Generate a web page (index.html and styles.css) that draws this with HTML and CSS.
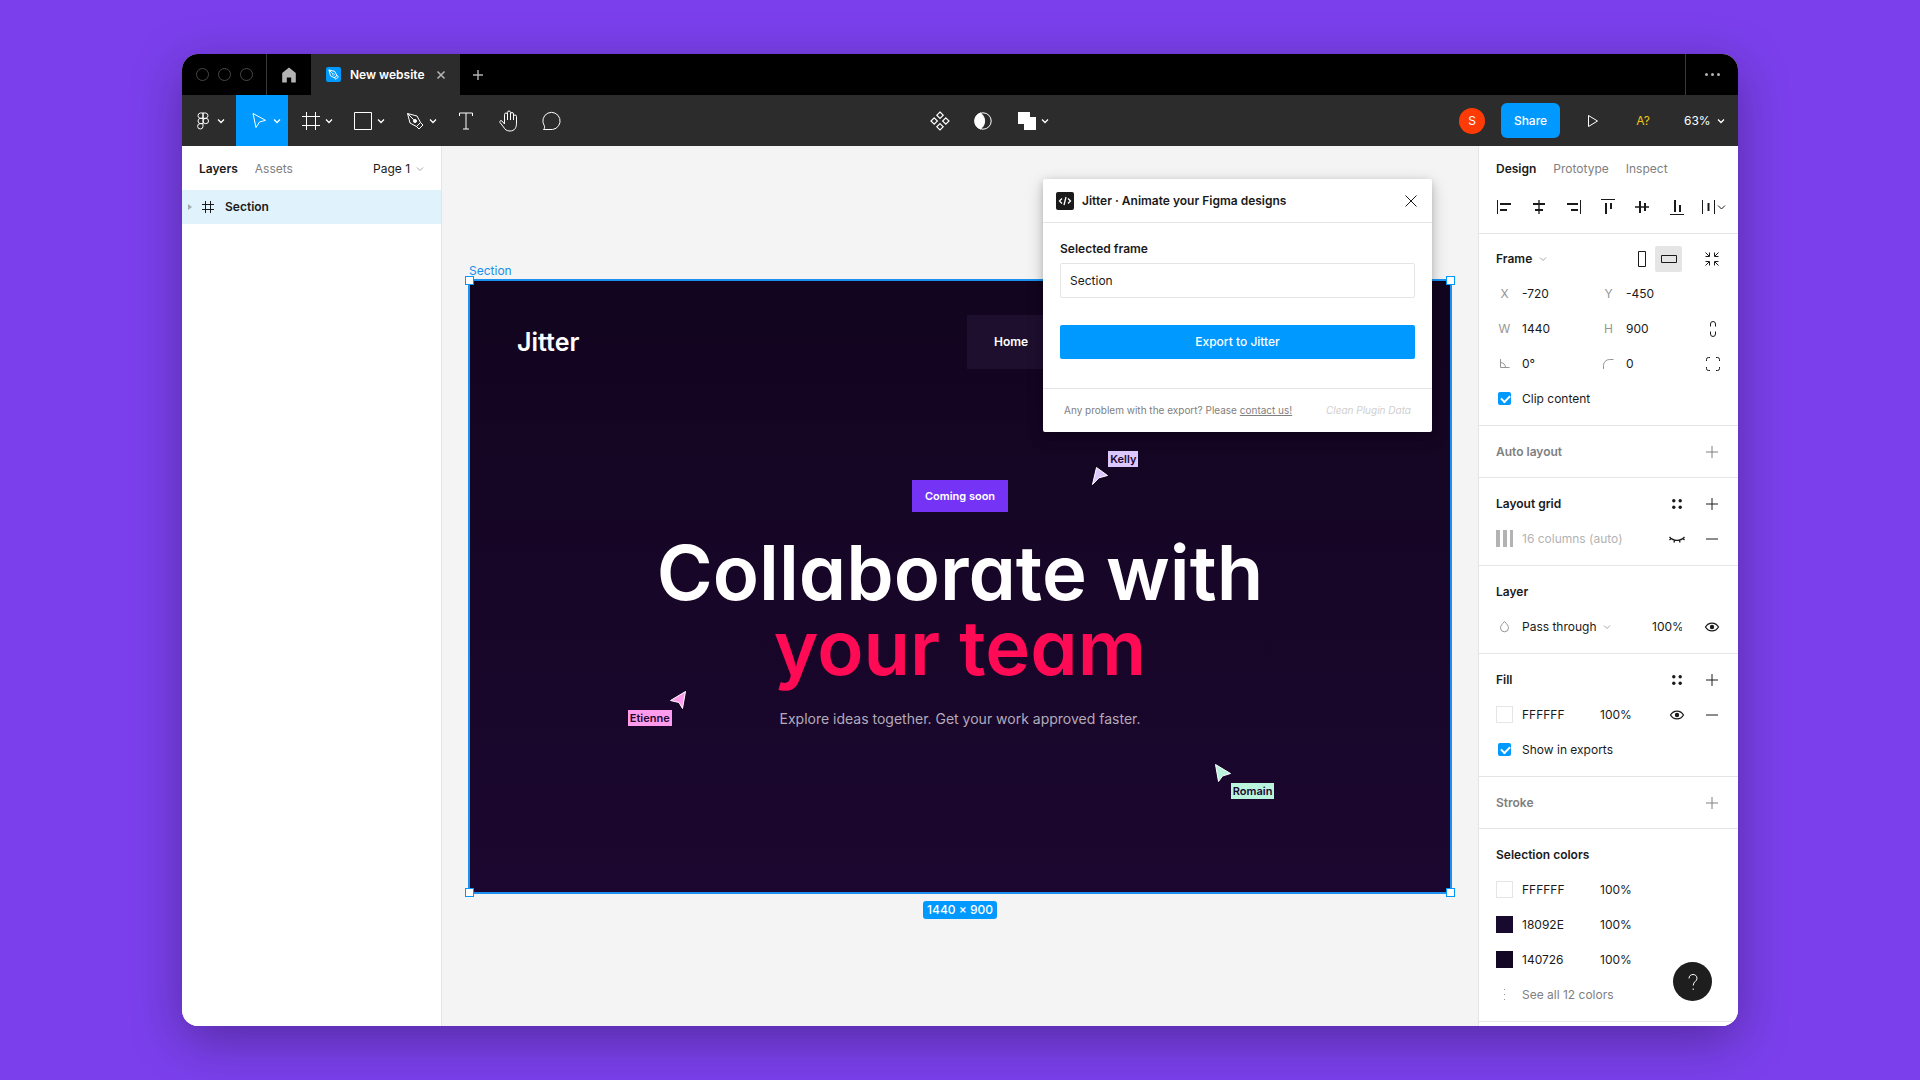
FILE: index.html
```html
<!DOCTYPE html>
<html lang="en">
<head>
  <meta charset="UTF-8" />
  <title>New website</title>
  <link rel="stylesheet" href="styles.css">
</head>
<body>
  <!-- Shared icons -->
  <svg class="sprite" aria-hidden="true">
    <symbol id="chevron" viewBox="0 0 8 8"><path d="M1 2.500l3 3 3-3"/></symbol>
    <symbol id="plus" viewBox="0 0 18 18"><path d="M9 3v12M3 9h12"/></symbol>
    <symbol id="minus" viewBox="0 0 18 18"><path d="M3 9h12"/></symbol>
    <symbol id="hash" viewBox="0 0 18 18"><path d="M4.500 0v18M13.500 0v18M0 4.500h18M0 13.500h18"/></symbol>
    <symbol id="dots" viewBox="0 0 18 18"><g fill="currentColor" stroke="none"><circle cx="5.800" cy="5.800" r="1.700"/><circle cx="12.200" cy="5.800" r="1.700"/><circle cx="5.800" cy="12.200" r="1.700"/><circle cx="12.200" cy="12.200" r="1.700"/></g></symbol>
    <symbol id="eye" viewBox="0 0 18 18"><path d="M2.500 9c3-5.200 10-5.200 13 0-3 5.200-10 5.200-13 0z" stroke-width="1.300"/><circle cx="9" cy="9" r="2.200" fill="currentColor" stroke="none"/></symbol>
    <symbol id="pen" viewBox="0 0 18 18"><path d="M1.500 1.500l9.500 2.500 3.500 6.500-4 4-6.500-3.500zM1.500 1.500l6.300 6.300M10.500 14.500l4-4 2.500 2.500-4 4z"/><circle cx="9" cy="9" r="1.500" fill="currentColor"/></symbol>
  </svg>

  <div class="window">
    <header class="tabbar">
      <div class="lights"><i></i><i></i><i></i></div>
      <button class="home" aria-label="Home">
        <svg width="16" height="16" viewBox="0 0 16 16"><path d="M8 0.500L1.200 6v9.500h4.600v-5h4.400v5h4.600V6z" fill="#b3b3b3" stroke="none"/></svg>
      </button>
      <div class="tab">
        <span class="tab-icon"><svg width="11" height="11" viewBox="0 0 18 18"><path d="M1.500 1.500l9.500 2.500 3.500 6.500-4 4-6.500-3.500zM1.500 1.500l6.300 6.300M10.500 14.500l4-4 2.500 2.500-4 4z" stroke-width="1.600"/><circle cx="9" cy="9" r="1.500"/></svg></span>
        <span class="tab-name">New website</span>
        <button aria-label="Close tab"><svg width="10" height="10" viewBox="0 0 10 10"><path d="M1.500 1.500l7 7M8.500 1.500l-7 7" stroke-width="1.600"/></svg></button>
      </div>
      <button class="new-tab" aria-label="New tab"><svg width="16" height="16" viewBox="0 0 16 16"><path d="M8 3v10M3 8h10" stroke-width="1.400"/></svg></button>
      <button class="more" aria-label="More"><i></i><i></i><i></i></button>
    </header>

    <div class="toolbar">
      <div class="tools">
        <button class="tool wide" aria-label="Main menu">
          <svg width="18" height="18" viewBox="0 0 18 18"><path d="M9 1H6.200a2.700 2.700 0 0 0 0 5.300H9zM9 1h2.800a2.700 2.700 0 0 1 0 5.300H9zM9 6.300H6.200a2.700 2.700 0 0 0 0 5.300H9zM9 11.600H6.200A2.700 2.700 0 1 0 9 14.300z"/><circle cx="11.800" cy="9" r="2.700"/></svg>
          <svg class="chev" width="8" height="8"><use href="#chevron"/></svg>
        </button>
        <button class="tool wide active" aria-label="Move">
          <svg width="18" height="18" viewBox="0 0 18 18"><path d="M3 1.500l12.500 6.800-6 1.700-3.500 5.500z"/></svg>
          <svg class="chev" width="8" height="8"><use href="#chevron"/></svg>
        </button>
        <button class="tool wide" aria-label="Frame">
          <svg width="18" height="18"><use href="#hash"/></svg>
          <svg class="chev" width="8" height="8"><use href="#chevron"/></svg>
        </button>
        <button class="tool wide" aria-label="Rectangle">
          <svg width="18" height="18" viewBox="0 0 18 18"><path d="M.5.5h17v17H.5z"/></svg>
          <svg class="chev" width="8" height="8"><use href="#chevron"/></svg>
        </button>
        <button class="tool wide" aria-label="Pen">
          <svg width="18" height="18"><use href="#pen"/></svg>
          <svg class="chev" width="8" height="8"><use href="#chevron"/></svg>
        </button>
        <button class="tool" aria-label="Text">
          <svg width="18" height="18" viewBox="0 0 18 18"><path d="M2.500 4V1h13v3M9 1v16M6 17h6"/></svg>
        </button>
        <button class="tool" aria-label="Hand">
          <svg width="22" height="22" viewBox="0 0 22 22"><path d="M6.500 12V4.500a1.500 1.500 0 0 1 3 0V10M9.500 9V2.500a1.500 1.500 0 0 1 3 0V10M12.500 4a1.500 1.500 0 0 1 3 0v6M15.500 6.500a1.500 1.500 0 0 1 3 0V13c0 5-2 8-6.500 8-3.500 0-5-1.500-6.500-4L2 12.500c-.8-1.300.8-2.600 2-1.500l2.500 3V12"/></svg>
        </button>
        <button class="tool" aria-label="Comment">
          <svg width="20" height="20" viewBox="0 0 20 20"><path d="M1.500 18.500c1.200-1.200 1.300-2 .8-3.800A8.600 8.600 0 1 1 10.500 18.500z"/></svg>
        </button>
      </div>

      <div class="tools center">
        <button class="tool" aria-label="Create component">
          <svg width="20" height="20" viewBox="0 0 20 20"><path d="M10 1l3.200 3.200L10 7.400 6.800 4.200zM4.200 6.800L7.400 10l-3.200 3.200L1 10zM15.800 6.800L19 10l-3.200 3.200-3.200-3.200zM10 12.600l3.200 3.200L10 19l-3.200-3.200z" stroke-width="1.200"/></svg>
        </button>
        <button class="tool" aria-label="Use as mask">
          <svg width="18" height="18" viewBox="0 0 18 18"><circle cx="9" cy="9" r="8.200"/><path d="M6.500 1C12 5 12 13 6.500 17A8.500 8.500 0 0 1 6.500 1z" fill="#fff"/></svg>
        </button>
        <button class="tool wide" aria-label="Union selection">
          <svg width="18" height="18" viewBox="0 0 18 18"><path d="M0 0h12v5h6v13H6v-6H0z" fill="#fff" stroke="none"/></svg>
          <svg class="chev" width="8" height="8"><use href="#chevron"/></svg>
        </button>
      </div>

      <div class="tools right">
        <span class="avatar">S</span>
        <button class="share">Share</button>
        <button class="tool play" aria-label="Present"><svg width="12" height="14" viewBox="0 0 12 14"><path d="M1.500 1.500v11l9-5.500z"/></svg></button>
        <button class="fonts">A?</button>
        <label class="drop zoom">
          <select aria-label="Zoom"><option>63%</option></select>
          <svg class="chev" width="8" height="8"><use href="#chevron"/></svg>
        </label>
      </div>
    </div>

    <main class="workspace">
      <aside class="layers">
        <div class="panel-tabs">
          <a class="current" href="#">Layers</a>
          <a href="#">Assets</a>
          <label class="drop page">
            <select aria-label="Page"><option>Page 1</option></select>
            <svg width="8" height="8"><use href="#chevron"/></svg>
          </label>
        </div>
        <div class="layer-row">
          <svg class="caret" width="4" height="6" viewBox="0 0 4 6"><path d="M0 0l4 3-4 3z"/></svg>
          <svg width="12" height="12" viewBox="0 0 12 12"><path d="M3.500 0v12M8.500 0v12M0 3.500h12M0 8.500h12"/></svg>
          <span>Section</span>
        </div>
      </aside>

      <section class="canvas">
        <span class="frame-name">Section</span>
        <div class="frame">
          <i class="handle tl"></i><i class="handle tr"></i><i class="handle bl"></i><i class="handle br"></i>
          <div class="site-header">
            <span class="logo">Jitter</span>
            <nav class="site-nav"><a href="#">Home</a></nav>
          </div>
          <div class="hero">
            <span class="soon">Coming soon</span>
            <h1>Collaborate with<br><em>your team</em></h1>
            <p>Explore ideas together. Get your work approved faster.</p>
          </div>

          <div class="peer kelly">
            <span>Kelly</span>
            <svg width="16" height="18" viewBox="0 0 16 18"><path d="M4.500 0.500l11 8-8.500 2.300L0.500 17.500z" fill="#dcc8ff"/></svg>
          </div>
          <div class="peer etienne">
            <svg width="16" height="18" viewBox="0 0 16 18"><path d="M15.500 0.500L12.500 17.500 9 11.500 0.500 9.500z" fill="#ff9bec"/></svg>
            <span>Etienne</span>
          </div>
          <div class="peer romain">
            <svg width="16" height="18" viewBox="0 0 16 18"><path d="M0.500 0.500l15 9-8 2.500-4 5.500z" fill="#b8f5dc"/></svg>
            <span>Romain</span>
          </div>
        </div>
        <span class="size">1440 × 900</span>

        <div class="plugin">
          <div class="plugin-head">
            <span class="plugin-icon"><svg width="14" height="10" viewBox="0 0 14 10"><path d="M4 2.500L1.500 5 4 7.500M10 2.500L12.500 5 10 7.500M8 1L6 9" stroke-width="1.300"/></svg></span>
            <strong>Jitter · Animate your Figma designs</strong>
            <button aria-label="Close"><svg width="14" height="14" viewBox="0 0 14 14"><path d="M1.500 1.500l11 11M12.500 1.500l-11 11"/></svg></button>
          </div>
          <div class="plugin-body">
            <label for="selected">Selected frame</label>
            <input id="selected" type="text" value="Section">
            <button class="export">Export to Jitter</button>
          </div>
          <div class="plugin-foot">
            <span>Any problem with the export? Please <a href="#">contact us!</a></span>
            <button>Clean Plugin Data</button>
          </div>
        </div>
      </section>

      <aside class="design">
        <div class="panel-tabs">
          <a class="current" href="#">Design</a>
          <a href="#">Prototype</a>
          <a href="#">Inspect</a>
        </div>
        <div class="align">
          <button aria-label="Align left"><svg width="18" height="18" viewBox="0 0 18 18"><path d="M1.500 2v14"/><path d="M4 6h11M4 12h7" stroke-width="2"/></svg></button>
          <button aria-label="Align horizontal centers"><svg width="18" height="18" viewBox="0 0 18 18"><path d="M9 2v14" stroke-width="1.300"/><path d="M3 6h12M5 12h8" stroke-width="2"/></svg></button>
          <button aria-label="Align right"><svg width="18" height="18" viewBox="0 0 18 18"><path d="M15.500 2v14"/><path d="M2 6h11M6 12h7" stroke-width="2"/></svg></button>
          <button aria-label="Align top"><svg width="18" height="18" viewBox="0 0 18 18"><path d="M2 1.500h14"/><path d="M7 5v11M12 5v6" stroke-width="2"/></svg></button>
          <button aria-label="Align vertical centers"><svg width="18" height="18" viewBox="0 0 18 18"><path d="M2 9h14" stroke-width="1.300"/><path d="M7 3v12M12 5v8" stroke-width="2"/></svg></button>
          <button aria-label="Align bottom"><svg width="18" height="18" viewBox="0 0 18 18"><path d="M2 16.500h14"/><path d="M7 2v12M12 7v7" stroke-width="2"/></svg></button>
          <button aria-label="Distribute"><svg width="24" height="18" viewBox="0 0 24 18"><path d="M.5 2v14M12.500 2v14M16 7.500l3.500 3.500 3.500-3.500"/><path d="M6.500 5v8" stroke-width="2"/></svg></button>
        </div>

        <section class="group transform">
          <div class="row title">
            <label class="drop">
              <select aria-label="Frame type"><option>Frame</option></select>
              <svg width="8" height="8"><use href="#chevron"/></svg>
            </label>
            <span class="orient">
              <button aria-label="Portrait"><svg width="18" height="18" viewBox="0 0 18 18"><path d="M5.500 1.500h7v15h-7z"/></svg></button>
              <button class="on" aria-label="Landscape"><svg width="18" height="18" viewBox="0 0 18 18"><path d="M1.500 5.500h15v7h-15z"/></svg></button>
            </span>
            <button aria-label="Resize to fit"><svg width="18" height="18" viewBox="0 0 18 18"><path d="M2.500 2.500l3.500 3.500M6.500 2.500v4h-4M15.500 2.500L12 6M11.500 2.500v4h4M2.500 15.500L6 12M2.500 11.500h4v4M15.500 15.500L12 12M15.500 11.500h-4v4"/></svg></button>
          </div>
          <div class="row">
            <label for="x">X</label><input id="x" value="-720">
            <label for="y">Y</label><input id="y" value="-450">
          </div>
          <div class="row">
            <label for="w">W</label><input id="w" value="1440">
            <label for="h">H</label><input id="h" value="900">
            <button class="end" aria-label="Constrain proportions"><svg width="18" height="18" viewBox="0 0 18 18"><path d="M6.500 6.500V4a2.500 2.500 0 0 1 5 0v2.500M6.500 11.500V14a2.500 2.500 0 0 0 5 0v-2.500"/></svg></button>
          </div>
          <div class="row">
            <label for="angle" aria-label="Rotation"><svg width="17" height="17" viewBox="0 0 17 17"><path d="M4.500 4v8.500h9M4.500 7.500a5 5 0 0 1 5 5"/></svg></label><input id="angle" value="0°">
            <label for="radius" aria-label="Corner radius"><svg width="17" height="17" viewBox="0 0 17 17"><path d="M3.500 14V10.500a6 6 0 0 1 6-6h4"/></svg></label><input id="radius" value="0">
            <button class="end" aria-label="Independent corners"><svg width="18" height="18" viewBox="0 0 18 18"><path d="M2.500 6V4.500a2 2 0 0 1 2-2H6M12 2.500h1.500a2 2 0 0 1 2 2V6M15.500 12v1.500a2 2 0 0 1-2 2H12M6 15.500H4.500a2 2 0 0 1-2-2V12"/></svg></button>
          </div>
          <div class="row">
            <label class="check"><input type="checkbox" checked>Clip content</label>
          </div>
        </section>

        <section class="group">
          <div class="row title muted"><h2>Auto layout</h2><button aria-label="Add"><svg width="18" height="18"><use href="#plus"/></svg></button></div>
        </section>

        <section class="group">
          <div class="row title"><h2>Layout grid</h2>
            <button aria-label="Styles"><svg width="18" height="18"><use href="#dots"/></svg></button>
            <button aria-label="Add"><svg width="18" height="18"><use href="#plus"/></svg></button>
          </div>
          <div class="row">
            <i class="columns"></i><span class="fill faint">16 columns (auto)</span>
            <button aria-label="Show grid"><svg width="18" height="18" viewBox="0 0 18 18"><path d="M1.500 7c4 4.500 11 4.500 15 0M3 8.500L1.500 10M6.500 10.300L6 12.500M11.500 10.300l.5 2.200M15 8.500l1.500 1.500" stroke-width="1.300"/></svg></button>
            <button aria-label="Remove"><svg width="18" height="18"><use href="#minus"/></svg></button>
          </div>
        </section>

        <section class="group">
          <div class="row title"><h2>Layer</h2></div>
          <div class="row">
            <span class="lead"><svg width="17" height="17" viewBox="0 0 17 17"><path d="M8.500 3.500c2.500 2.800 4 4.200 4 6.300a4 4 0 0 1-8 0c0-2.100 1.500-3.500 4-6.300z"/></svg></span>
            <label class="drop">
              <select aria-label="Blend mode"><option>Pass through</option></select>
              <svg width="8" height="8"><use href="#chevron"/></svg>
            </label>
            <input class="opacity" aria-label="Layer opacity" value="100%">
            <button aria-label="Hide layer"><svg width="18" height="18"><use href="#eye"/></svg></button>
          </div>
        </section>

        <section class="group">
          <div class="row title"><h2>Fill</h2>
            <button aria-label="Styles"><svg width="18" height="18"><use href="#dots"/></svg></button>
            <button aria-label="Add"><svg width="18" height="18"><use href="#plus"/></svg></button>
          </div>
          <div class="row">
            <i class="swatch white"></i><input aria-label="Fill color" value="FFFFFF"><input class="percent" aria-label="Fill opacity" value="100%">
            <button class="end" aria-label="Hide fill"><svg width="18" height="18"><use href="#eye"/></svg></button>
            <button aria-label="Remove"><svg width="18" height="18"><use href="#minus"/></svg></button>
          </div>
          <div class="row">
            <label class="check"><input type="checkbox" checked>Show in exports</label>
          </div>
        </section>

        <section class="group">
          <div class="row title muted"><h2>Stroke</h2><button aria-label="Add"><svg width="18" height="18"><use href="#plus"/></svg></button></div>
        </section>

        <section class="group">
          <div class="row title"><h2>Selection colors</h2></div>
          <div class="row"><i class="swatch white"></i><input aria-label="Color 1" value="FFFFFF"><input class="percent" aria-label="Opacity 1" value="100%"></div>
          <div class="row"><i class="swatch violet"></i><input aria-label="Color 2" value="18092E"><input class="percent" aria-label="Opacity 2" value="100%"></div>
          <div class="row"><i class="swatch night"></i><input aria-label="Color 3" value="140726"><input class="percent" aria-label="Opacity 3" value="100%"></div>
          <div class="row">
            <span class="lead"><svg width="17" height="17" viewBox="0 0 17 17"><path d="M8.500 3v11" stroke-dasharray="1 4"/></svg></span>
            <a class="see-all" href="#">See all 12 colors</a>
          </div>
        </section>
        <section class="group"></section>
      </aside>
    </main>

    <button class="help" aria-label="Help"><svg width="14" height="18" viewBox="0 0 14 18"><path d="M3 5.500C3 3 4.700 1.500 7 1.500s4 1.500 4 3.800C11 8.500 7.200 8.500 7.200 12.500M7.200 15.500v1.500"/></svg></button>
  </div>
</body>
</html>
```
FILE: styles.css
```css
* {
  box-sizing: border-box;
}

body {
  margin: 0;
  height: 100vh;
  padding: 54px 182px;
  background: #7b40ec;
  font-family: Inter, "Liberation Sans", sans-serif;
  font-size: 12px;
  line-height: 16px;
  color: #1a1a1a;
  overflow: hidden;
}

a {
  color: inherit;
  text-decoration: none;
}

button, input, select {
  margin: 0;
  padding: 0;
  border: none;
  background: none;
  color: inherit;
  font: inherit;
  outline: none;
}

select {
  appearance: none;
}

svg {
  display: block;
  flex: none;
  fill: none;
  stroke: currentColor;
}

.sprite {
  position: absolute;
  width: 0;
  height: 0;
}

.window {
  position: relative;
  display: flex;
  flex-direction: column;
  height: 100%;
  border-radius: 16px;
  background: #fff;
  box-shadow: 0 14px 50px rgba(40, 20, 70, 0.45);
}

/* Tab bar */
.tabbar {
  display: flex;
  height: 41px;
  flex: none;
  border-radius: 16px 16px 0 0;
  background: #000;
  color: #b3b3b3;
}

.tabbar button {
  display: flex;
  align-items: center;
  justify-content: center;
}

.lights {
  display: flex;
  align-items: center;
  gap: 9px;
  width: 85px;
  padding-left: 14px;
  border-right: 1px solid #3a3a3a;
}

.lights i {
  width: 13px;
  height: 13px;
  border: 1px solid #484848;
  border-radius: 50%;
}

.home {
  width: 44px;
}

.tab {
  display: flex;
  align-items: center;
  width: 149px;
  padding: 0 14px 0 15px;
  background: #2c2c2c;
}

.tab-icon {
  display: flex;
  align-items: center;
  justify-content: center;
  width: 15px;
  height: 15px;
  margin-right: 9px;
  border-radius: 2px;
  background: #0099ff;
  color: #fff;
}

.tab-name {
  flex: 1;
  color: #fff;
  font-weight: 600;
}

.new-tab {
  width: 36px;
}

.more {
  gap: 3px;
  width: 53px;
  margin-left: auto;
  border-left: 1px solid #3a3a3a;
}

.more i {
  width: 3px;
  height: 3px;
  border-radius: 50%;
  background: #b3b3b3;
}

/* Toolbar */
.toolbar {
  display: flex;
  height: 51px;
  flex: none;
  background: #2c2c2c;
  color: #fff;
}

.tools {
  display: flex;
  flex: 1;
}

.tools.center {
  flex: none;
  margin-left: 54px;
}

.tools.right {
  align-items: center;
  justify-content: flex-end;
}

.tool {
  display: flex;
  align-items: center;
  justify-content: center;
  width: 43px;
}

.tool.wide {
  gap: 5px;
  width: 52px;
  padding-left: 7px;
}

.tool.wide:first-child {
  width: 54px;
  padding: 0;
}

.tool.active {
  background: #0099ff;
}

.chev {
  overflow: visible;
  stroke-width: 1.3;
}

.avatar {
  width: 26px;
  height: 26px;
  border-radius: 50%;
  background: #ff3b05;
  line-height: 26px;
  text-align: center;
}

.share {
  width: 59px;
  height: 35px;
  margin: 0 11px 0 16px;
  border-radius: 6px;
  background: #0099ff;
  font-weight: 500;
}

.fonts {
  width: 58px;
  color: #f2c21a;
}

.drop {
  display: flex;
  align-items: center;
  gap: 6px;
}

.drop svg {
  color: #a8a8a8;
}

.zoom {
  padding: 0 13px 0 12px;
}

.zoom .chev {
  color: #fff;
}

/* Workspace */
.workspace {
  display: flex;
  flex: 1;
  min-height: 0;
  border-radius: 0 0 16px 16px;
  overflow: hidden;
}

.layers, .design {
  flex: none;
  width: 260px;
  background: #fff;
}

.layers {
  border-right: 1px solid #e5e5e5;
}

.design {
  border-left: 1px solid #e5e5e5;
  overflow: hidden;
}

.panel-tabs {
  display: flex;
  align-items: center;
  gap: 17px;
  height: 44px;
  padding: 1px 17px 0;
  color: #808080;
}

.panel-tabs .current {
  color: #1a1a1a;
  font-weight: 600;
}

.page {
  gap: 5px;
  margin-left: auto;
  color: #1a1a1a;
}

.layer-row {
  display: flex;
  align-items: center;
  height: 34px;
  padding-left: 6px;
  background: #e0f2fb;
  font-weight: 600;
}

.layer-row span {
  margin-left: 11px;
}

.caret {
  margin-right: 10px;
  fill: #a0aab0;
  stroke: none;
}

/* Canvas */
.canvas {
  position: relative;
  flex: 1;
  padding: 117px 26px 0;
  background: #f4f4f4;
  text-align: center;
}

.frame-name {
  display: block;
  padding-left: 1px;
  color: #1a8fe8;
  text-align: left;
}

.frame {
  position: relative;
  aspect-ratio: 16 / 10;
  border: 2px solid #1a90f0;
  background: linear-gradient(#12051f, #1c0730);
  color: #fff;
}

.handle {
  position: absolute;
  width: 9px;
  height: 9px;
  border: 1px solid #0099ff;
  background: #fff;
}

.tl { left: -5px; top: -5px; }
.tr { right: -5px; top: -5px; }
.bl { left: -5px; bottom: -5px; }
.br { right: -5px; bottom: -5px; }

.site-header {
  display: flex;
  align-items: center;
  justify-content: space-between;
  padding: 34px 47px 0;
}

.logo {
  font-size: 25px;
  line-height: 32px;
  font-weight: 600;
}

.site-nav {
  display: flex;
  width: 436px;
  padding: 19px 27px;
  background: #1e0f2e;
  font-weight: 600;
}

.hero {
  display: flex;
  flex-direction: column;
  align-items: center;
  padding-top: 111px;
}

.soon {
  padding: 8px 13px;
  background: #7533f5;
  font-size: 11px;
  font-weight: 600;
}

.hero h1 {
  margin: 23px 0 0;
  font-size: 76px;
  line-height: 75px;
  font-weight: 600;
  font-feature-settings: "cv11";
  white-space: nowrap;
}

.hero em {
  color: #ff0a55;
  font-style: normal;
}

.hero p {
  margin: 24px 0 0;
  color: #b3abba;
  font-size: 14px;
  line-height: 20px;
}

/* Multiplayer cursors */
.peer {
  position: absolute;
  display: flex;
  flex-direction: column;
  color: #1c0730;
  font-size: 11px;
  font-weight: 600;
}

.peer span {
  padding: 0 2px;
}

.peer svg {
  stroke: #fff;
}

.kelly { left: 63.5%; top: 27.8%; }
.kelly span { margin-left: 16px; background: #dcc8ff; }

.etienne { left: 16.1%; top: 67.1%; align-items: flex-end; }
.etienne span { margin: 1px 14px 0 0; background: #ff9bec; }

.romain { left: 76%; top: 79%; }
.romain span { margin: 1px 0 0 16px; background: #b8f5dc; }

.size {
  display: inline-block;
  margin-top: 7px;
  padding: 1px 4px;
  border-radius: 3px;
  background: #0099ff;
  color: #fff;
  font-weight: 500;
}

/* Plugin dialog */
.plugin {
  position: absolute;
  top: 33px;
  right: 46px;
  width: 389px;
  border-radius: 2px;
  background: #fff;
  box-shadow: 0 5px 17px rgba(0, 0, 0, 0.2), 0 2px 7px rgba(0, 0, 0, 0.15);
  text-align: left;
}

.plugin-head {
  display: flex;
  align-items: center;
  height: 44px;
  padding: 0 14px 0 13px;
  border-bottom: 1px solid #e5e5e5;
}

.plugin-head strong {
  flex: 1;
  font-weight: 600;
}

.plugin-icon {
  display: flex;
  align-items: center;
  justify-content: center;
  width: 18px;
  height: 18px;
  margin-right: 8px;
  border-radius: 2px;
  background: #1a1a1a;
  color: #fff;
}

.plugin-body {
  display: flex;
  flex-direction: column;
  padding: 18px 17px 29px;
}

.plugin-body label {
  margin-bottom: 6px;
  font-weight: 600;
}

.plugin-body input {
  height: 35px;
  padding: 0 9px;
  border: 1px solid #e5e5e5;
  border-radius: 2px;
}

.export {
  height: 34px;
  margin-top: 27px;
  border-radius: 2px;
  background: #0099ff;
  color: #fff;
  font-weight: 500;
}

.plugin-foot {
  display: flex;
  align-items: center;
  justify-content: space-between;
  height: 44px;
  padding: 0 21px 2px;
  border-top: 1px solid #e5e5e5;
  color: #808080;
  font-size: 10px;
}

.plugin-foot a {
  text-decoration: underline;
}

.plugin-foot button {
  color: #cfcfcf;
  font-style: italic;
}

/* Design panel */
.align {
  display: flex;
  justify-content: space-between;
  height: 43px;
  padding: 8px 12px 0 17px;
}

.align button {
  height: 18px;
}

.group {
  padding: 8px 17px;
  border-top: 1px solid #e5e5e5;
}

.transform {
  padding-top: 7px;
}

.row {
  display: flex;
  align-items: center;
  height: 35px;
}

.row + .row:last-child {
  margin-bottom: 1px;
}

.row > label:not(.check):not(.drop), .lead {
  display: flex;
  flex: none;
  justify-content: center;
  width: 17px;
  margin-right: 9px;
  color: #969696;
}

.row > input {
  width: 78px;
}

.row > .percent {
  width: 34px;
}

.row button {
  display: flex;
  align-items: center;
  justify-content: center;
  width: 18px;
  margin-left: 17px;
}

.row button.end {
  margin-left: auto;
}

.title {
  font-weight: 600;
}

.title h2 {
  flex: 1;
  margin: 0;
  font-size: 12px;
  font-weight: 600;
}

.muted {
  color: #808080;
}

.orient {
  display: flex;
  margin-left: auto;
}

.orient button {
  width: 27px;
  height: 26px;
  margin: 0;
  border-radius: 2px;
}

.orient .on {
  background: #e5e5e5;
}

.title .orient + button {
  margin-left: 21px;
}

.check {
  display: flex;
  align-items: center;
}

.check input {
  position: relative;
  appearance: none;
  width: 13px;
  height: 13px;
  margin: 0 11px 0 2px;
  border-radius: 2px;
  background: #0099ff;
}

/* tick mark */
.check input:checked::after {
  content: "";
  position: absolute;
  left: 3px;
  top: 3px;
  width: 7px;
  height: 4px;
  border: solid #fff;
  border-width: 0 0 2px 2px;
  transform: rotate(-45deg);
}

.columns {
  width: 17px;
  height: 17px;
  margin-right: 9px;
  background: repeating-linear-gradient(90deg, #b3b3b3 0 4px, transparent 4px 7px);
}

.fill {
  flex: 1;
}

.faint {
  color: #b3b3b3;
}

.row > .opacity {
  width: 30px;
  margin-left: auto;
}

.opacity + button {
  margin-left: 21px;
}

.swatch {
  flex: none;
  width: 17px;
  height: 17px;
  margin-right: 9px;
}

.white { border: 1px solid #e5e5e5; }
.violet { background: #18092e; }
.night { background: #140726; }

.see-all {
  color: #808080;
}

.help {
  position: absolute;
  right: 26px;
  bottom: 25px;
  display: flex;
  align-items: center;
  justify-content: center;
  width: 39px;
  height: 39px;
  border-radius: 50%;
  background: #1e1e1e;
  color: #fff;
}
```
